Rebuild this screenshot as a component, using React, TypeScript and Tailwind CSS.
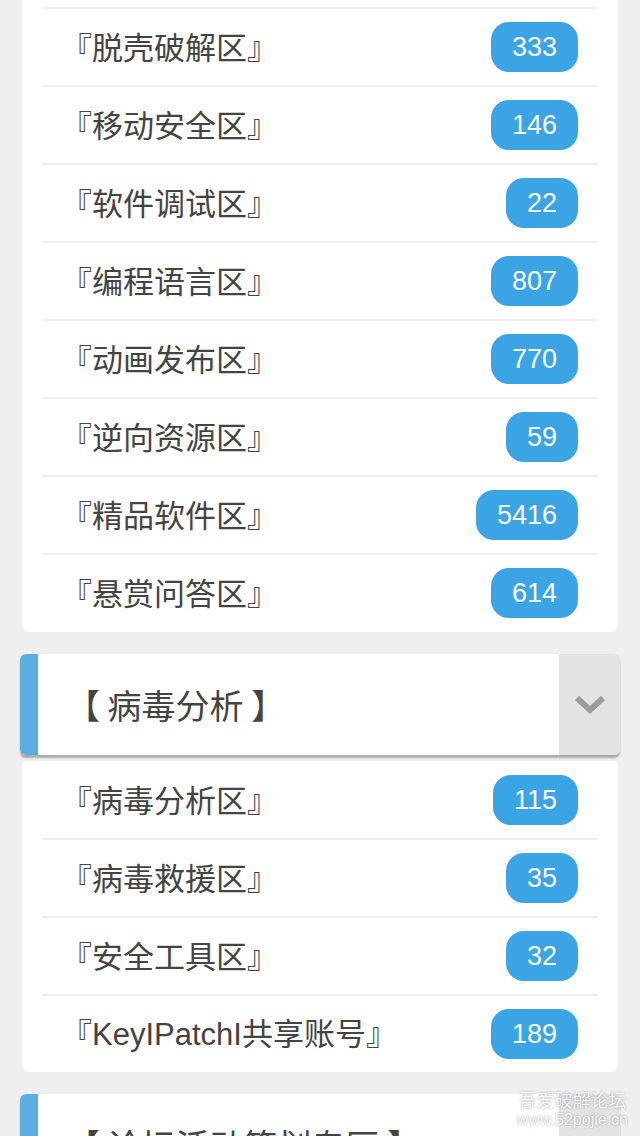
import React from "react";

const cjk = { fontFamily: '"Noto Sans CJK SC", sans-serif' };
const latin = { fontFamily: '"Liberation Sans", sans-serif' };

const Badge = ({ n }: { n: string }) => (
  <span className="h-[50px] px-[21px] rounded-[18px] bg-[#3aa4e4] text-white text-[27px] leading-[50px] flex items-center" style={latin}>
    {n}
  </span>
);

const Row = ({ name, count, first, h = "h-[78px]" }: { name: React.ReactNode; count: string; first?: boolean; h?: string }) => (
  <div className={`${h} mx-[20px] flex items-center justify-between pl-[19px] pr-[20px] ${first ? "" : "border-t-2 border-[#eeeeee]"}`}>
    <span className="text-[31px] leading-[40px] text-[#444444] -mt-[2px]" style={cjk}>
      『{name}』
    </span>
    <Badge n={count} />
  </div>
);

const SectionHeader = ({ title }: { title: string }) => (
  <div className="mx-[20px] h-[101px] flex bg-white rounded-[6px] shadow-[0_3px_2px_rgba(0,0,0,0.28)]">
    <div className="w-[18px] bg-[#5aade0] rounded-l-[6px]" />
    <div className="flex-1 flex items-center pl-[28px]">
      <span className="text-[34px] text-[#444444]" style={cjk}>
        {title}
      </span>
    </div>
    <div className="w-[61px] bg-[#e3e3e3] rounded-r-[6px] flex items-center justify-center">
      <svg width="32" height="22" viewBox="0 0 32 22">
        <polyline points="3,4 16,16 29,4" fill="none" stroke="#9c9c9c" strokeWidth="6" />
      </svg>
    </div>
  </div>
);

export default function App() {
  const crack = [
    ["脱壳破解区", "333"],
    ["移动安全区", "146"],
    ["软件调试区", "22"],
    ["编程语言区", "807"],
    ["动画发布区", "770"],
    ["逆向资源区", "59"],
    ["精品软件区", "5416"],
    ["悬赏问答区", "614"],
  ];
  const virus: [React.ReactNode, string, string][] = [
    ["病毒分析区", "115", "a"],
    ["病毒救援区", "35", "b"],
    ["安全工具区", "32", "c"],
    [
      <>
        <span style={latin}>KeyIPatchI</span>共享账号
      </>,
      "189",
      "d",
    ],
  ];

  return (
    <div className="relative h-[1136px] overflow-hidden bg-[#efefef]">
      <div className="mx-[22px] bg-white rounded-b-[8px] pt-[7px] pb-[1px]">
        {crack.map(([name, count]) => (
          <Row key={name} name={name} count={count} />
        ))}
      </div>

      <div className="h-[22px]" />
      <SectionHeader title="【 病毒分析 】" />

      <div className="mx-[22px] mt-[6px] bg-white rounded-b-[8px]">
        {virus.map(([name, count, k], i) => (
          <Row key={k} name={name} count={count} first={i === 0} h={i === 0 ? "h-[77px]" : "h-[78px]"} />
        ))}
      </div>

      <div className="h-[22px]" />
      <SectionHeader title="【 论坛活动策划专区 】" />

      <div className="absolute right-[12px] top-[1088px] flex flex-col items-center text-white/90 [text-shadow:0_0_2px_rgba(0,0,0,0.4)]">
        <span className="text-[18px] leading-[22px]" style={cjk}>
          吾爱破解论坛
        </span>
        <span className="text-[16px] leading-[20px]" style={latin}>
          www.52pojie.cn
        </span>
      </div>
    </div>
  );
}
